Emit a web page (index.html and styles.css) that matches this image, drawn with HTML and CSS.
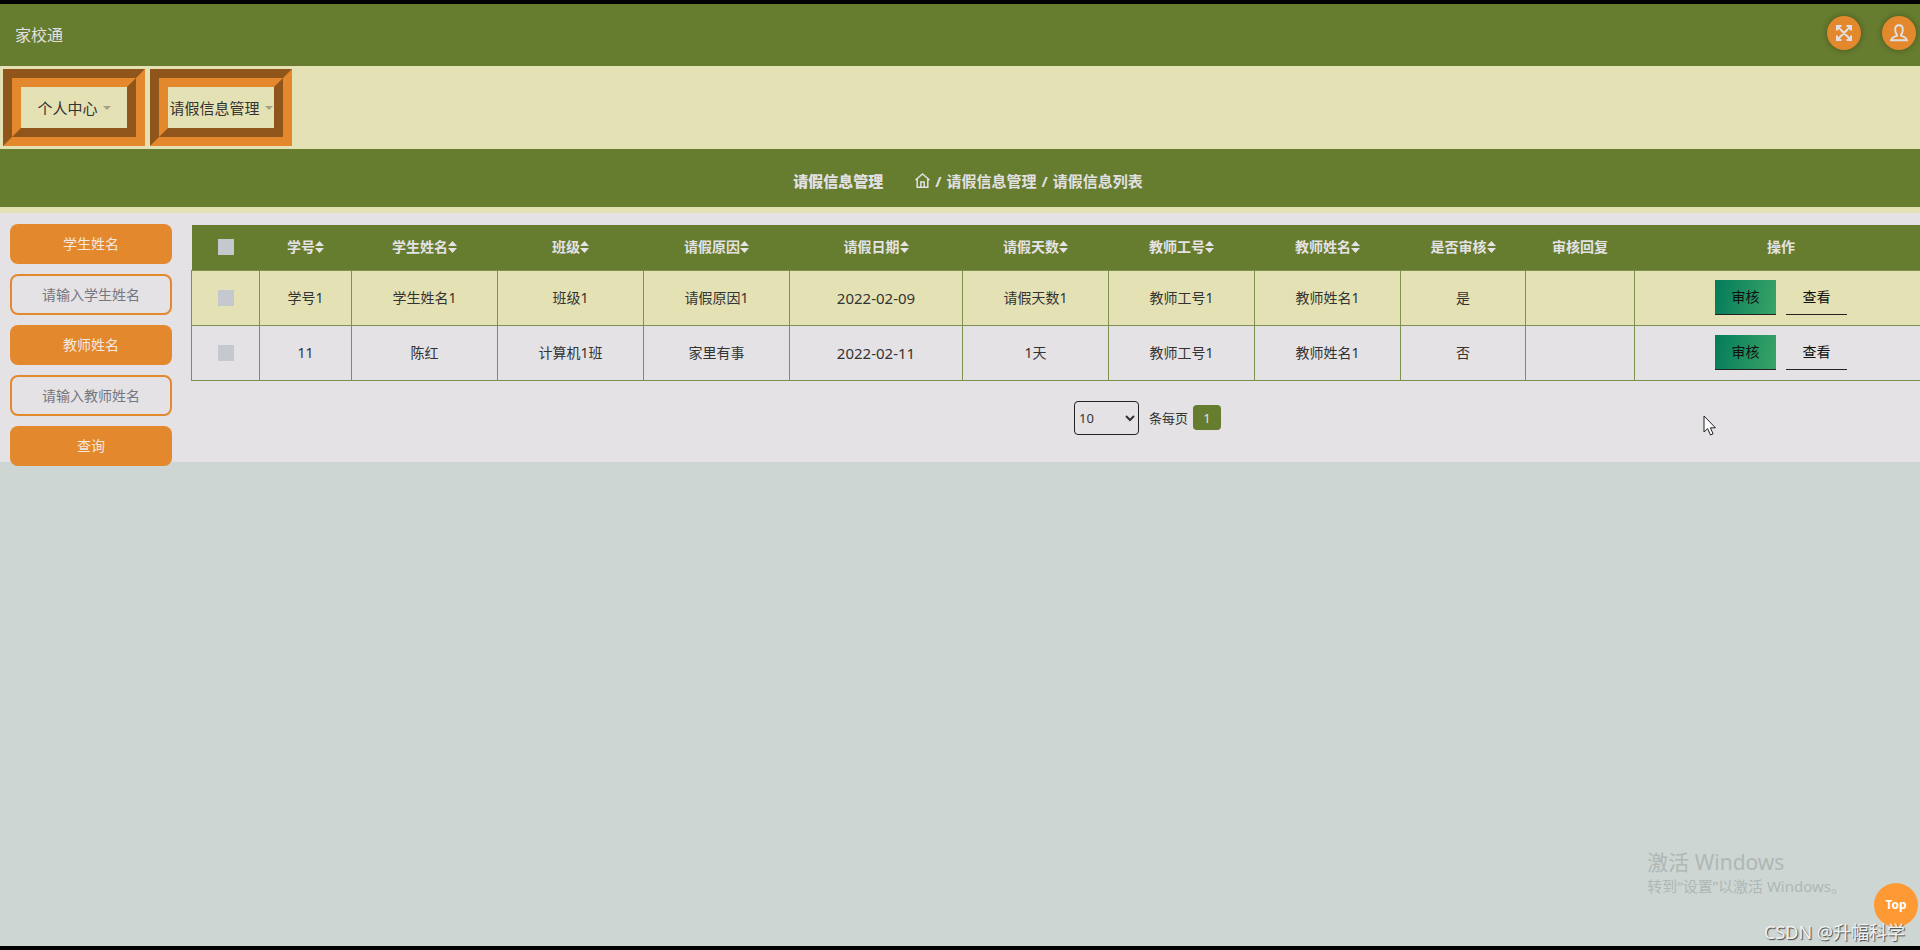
FILE: index.html
```html
<!DOCTYPE html>
<html lang="zh-CN">
<head>
<meta charset="utf-8">
<title>家校通</title>
<link rel="stylesheet" href="styles.css">
</head>
<body>
<svg class="defs" aria-hidden="true">
  <symbol id="sort" viewBox="0 0 9 12"><path d="M4.500 0L9 5H0zM0 7h9L4.500 12z" fill="currentColor"/></symbol>
</svg>
<header class="topbar">
  <h1 class="brand">家校通</h1>
  <div class="tools">
    <button class="round" aria-label="全屏"><svg width="18" height="18" viewBox="0 0 18 18" fill="none" stroke="currentColor" stroke-width="2"><path d="M2 6.500V2h4.500M11.500 2H16v4.500M16 11.500V16h-4.500M6.500 16H2v-4.500M2.500 2.500l13 13M15.500 2.500l-13 13"/></svg></button>
    <button class="round" aria-label="用户"><svg width="18" height="18" viewBox="0 0 18 18" fill="none" stroke="currentColor" stroke-width="1.900"><path d="M7 10.800C5.600 9.500 5.200 7.500 5.200 5.500C5.200 2.500 6.800 1.300 9 1.300s3.800 1.200 3.800 4.200c0 2-.4 4-1.800 5.300v1c2.500.8 5.200 1.500 5.900 4.400H1.100C1.800 13.300 4.500 12.600 7 11.800z"/></svg></button>
  </div>
</header>
<nav class="menu">
  <button class="menu-item">个人中心<span class="caret"></span></button>
  <button class="menu-item">请假信息管理<span class="caret"></span></button>
</nav>
<div class="crumbs">
  <strong>请假信息管理</strong>
  <div class="path">
    <a href="#" aria-label="首页"><svg width="15" height="15" viewBox="0 0 15 15" fill="none" stroke="currentColor" stroke-width="1.500"><path d="M.5 7L7.500 1l7 6M2.200 5.800v8.400h10.600V5.800M5.800 14V9h3.400v5"/></svg></a>
    <span>/</span><a href="#">请假信息管理</a><span>/</span><a href="#">请假信息列表</a>
  </div>
</div>
<main class="content">
  <form class="search">
    <label class="pill" for="student">学生姓名</label>
    <input class="field" id="student" type="text" placeholder="请输入学生姓名">
    <label class="pill" for="teacher">教师姓名</label>
    <input class="field" id="teacher" type="text" placeholder="请输入教师姓名">
    <button class="pill" type="button">查询</button>
  </form>
  <section class="results">
    <table class="grid">
      <colgroup><col class="c-check"><col class="c-id"><col class="c-std"><col class="c-std"><col class="c-std"><col class="c-date"><col class="c-std"><col class="c-std"><col class="c-std"><col class="c-state"><col class="c-reply"><col></colgroup>
      <thead>
        <tr>
          <th><input type="checkbox" class="check" aria-label="全选"></th>
          <th>学号<svg class="sort"><use href="#sort"/></svg></th>
          <th>学生姓名<svg class="sort"><use href="#sort"/></svg></th>
          <th>班级<svg class="sort"><use href="#sort"/></svg></th>
          <th>请假原因<svg class="sort"><use href="#sort"/></svg></th>
          <th>请假日期<svg class="sort"><use href="#sort"/></svg></th>
          <th>请假天数<svg class="sort"><use href="#sort"/></svg></th>
          <th>教师工号<svg class="sort"><use href="#sort"/></svg></th>
          <th>教师姓名<svg class="sort"><use href="#sort"/></svg></th>
          <th>是否审核<svg class="sort"><use href="#sort"/></svg></th>
          <th>审核回复</th>
          <th>操作</th>
        </tr>
      </thead>
      <tbody>
        <tr>
          <td><input type="checkbox" class="check" aria-label="选择第1行"></td>
          <td>学号1</td><td>学生姓名1</td><td>班级1</td><td>请假原因1</td><td class="date">2022-02-09</td><td>请假天数1</td><td>教师工号1</td><td>教师姓名1</td><td>是</td><td></td>
          <td><div class="actions"><button class="act audit">审核</button><button class="act">查看</button></div></td>
        </tr>
        <tr>
          <td><input type="checkbox" class="check" aria-label="选择第2行"></td>
          <td>11</td><td>陈红</td><td>计算机1班</td><td>家里有事</td><td class="date">2022-02-11</td><td>1天</td><td>教师工号1</td><td>教师姓名1</td><td>否</td><td></td>
          <td><div class="actions"><button class="act audit">审核</button><button class="act">查看</button></div></td>
        </tr>
      </tbody>
    </table>
    <div class="pager">
      <select id="size" class="size"><option>10</option></select>
      <label for="size">条每页</label>
      <button class="page">1</button>
    </div>
  </section>
</main>
<div class="activate"><p class="activate-title">激活 Windows</p><p>转到“设置”以激活 Windows。</p></div>
<button class="to-top">Top</button>
<div class="credit">CSDN @升幅科学</div>
<svg class="pointer" width="14" height="22" viewBox="0 0 14 22" aria-hidden="true"><path d="M1 1v16l3.600-3.400L7.500 20l2.600-1.200L7.400 12.800h5z" fill="#fff" stroke="#222" stroke-width="1"/></svg>
</body>
</html>
```

FILE: styles.css
```css
* { box-sizing: border-box; }

body {
  margin: 0;
  min-height: 100vh;
  border: solid #000;
  border-width: 4px 0;
  background: #cdd6d3;
  color: #333;
  font: 14px/20px "Noto Sans", "Noto Sans CJK SC", sans-serif;
  overflow: hidden;
  position: relative;
}

button, input, select { font: inherit; color: inherit; }
button { padding: 0; border: 0; background: none; }
a { color: inherit; text-decoration: none; }
p { margin: 0; }
.defs { display: none; }

.topbar {
  display: flex;
  align-items: center;
  justify-content: space-between;
  height: 62px;
  padding: 0 4px 4px 15px;
  background: #667c2e;
  color: #e2e0e2;
}
.brand { margin: 0; padding-top: 4px; font-size: 16px; font-weight: 400; }
.tools { display: flex; gap: 21px; }
.round {
  display: grid;
  place-items: center;
  width: 34px;
  height: 34px;
  border-radius: 50%;
  background: #e3882c;
  box-shadow: 0 0 6px rgba(0, 0, 0, .3);
}

.menu {
  display: flex;
  gap: 5px;
  padding: 3px;
  background: #e4e2b5;
}
.menu-item {
  display: flex;
  align-items: center;
  justify-content: center;
  gap: 5px;
  width: 142px;
  height: 77px;
  border: 18px groove #e3882c;
  font-size: 15px;
  white-space: nowrap;
}
.caret {
  border: 4px solid transparent;
  border-top-color: #a4a284;
  border-bottom: 0;
}

.crumbs {
  display: flex;
  align-items: center;
  justify-content: center;
  gap: 32px;
  height: 64px;
  padding: 5px 0 0 16px;
  border-bottom: 6px solid #e4e2b5;
  background: #667c2e;
  color: #e2e0e2;
  font-size: 15px;
  font-weight: 700;
}
.path { display: flex; align-items: center; gap: 5px; }
.path svg { display: block; }

.content {
  display: flex;
  gap: 19px;
  height: 249px;
  padding: 11px 0 0 10px;
  background: #e4e2e5;
}
.search {
  display: flex;
  flex-direction: column;
  gap: 10px;
  flex: 0 0 162px;
}
.pill, .field {
  flex: none;
  width: 100%;
  border-radius: 8px;
  text-align: center;
}
.pill {
  height: 40px;
  background: #e3882c;
  color: #f2e8e0;
  line-height: 40px;
}
.field {
  height: 41px;
  border: 2px solid #e3882c;
  background: transparent;
}
.field::placeholder { color: #757680; opacity: 1; }

.results { flex: 1; min-width: 0; padding-top: 1px; }
.grid {
  width: calc(100% + 8px);
  table-layout: fixed;
  border-collapse: collapse;
}
.c-check { width: 68px; }
.c-id { width: 92px; }
.c-std { width: 146px; }
.c-date { width: 173px; }
.c-state { width: 125px; }
.c-reply { width: 109px; }
.grid th, .grid td { padding: 0; text-align: center; }
.grid th {
  height: 45px;
  background: #667c2e;
  color: #e4e2e5;
  font-weight: 700;
}
.grid td { height: 55px; border: 1px solid #7f9150; }
.grid tbody tr:first-child { background: #e4e2b5; }
.grid .date { font-size: 15px; }
.sort { width: 9px; height: 12px; vertical-align: -1px; }
.check {
  appearance: none;
  display: block;
  width: 16px;
  height: 16px;
  margin: 0 auto;
  background: #c5c8ce;
}
.actions { display: flex; justify-content: center; gap: 10px; }
.act {
  width: 61px;
  height: 35px;
  border-bottom: 1px solid #222;
  color: #111;
}
.audit { background: linear-gradient(100deg, #037b5a, #3aa467); }

.pager {
  display: flex;
  align-items: center;
  justify-content: center;
  padding: 20px 0 0 184px;
  font-size: 13px;
}
.size {
  width: 65px;
  height: 34px;
  margin-right: 10px;
  border: 1px solid #222;
  border-radius: 4px;
  background: transparent;
}
.page {
  width: 28px;
  height: 25px;
  margin-left: 5px;
  border-radius: 4px;
  background: #667c2e;
  color: #e4e2e5;
}

.activate {
  position: absolute;
  right: 74px;
  bottom: 48px;
  color: #b0b7b5;
  font-size: 15px;
  line-height: 24px;
}
.activate-title { font-size: 21px; }
.to-top {
  position: absolute;
  right: 2px;
  bottom: 19px;
  width: 44px;
  height: 44px;
  border-radius: 50%;
  background: #f93;
  color: #fff;
  font-size: 12px;
  font-weight: 700;
}
.credit {
  position: absolute;
  right: 15px;
  bottom: 4px;
  color: #f0f2f1;
  font-size: 18px;
  text-shadow: 1px 1px 1px #444;
}
.pointer { position: absolute; left: 1703px; top: 411px; }
```
